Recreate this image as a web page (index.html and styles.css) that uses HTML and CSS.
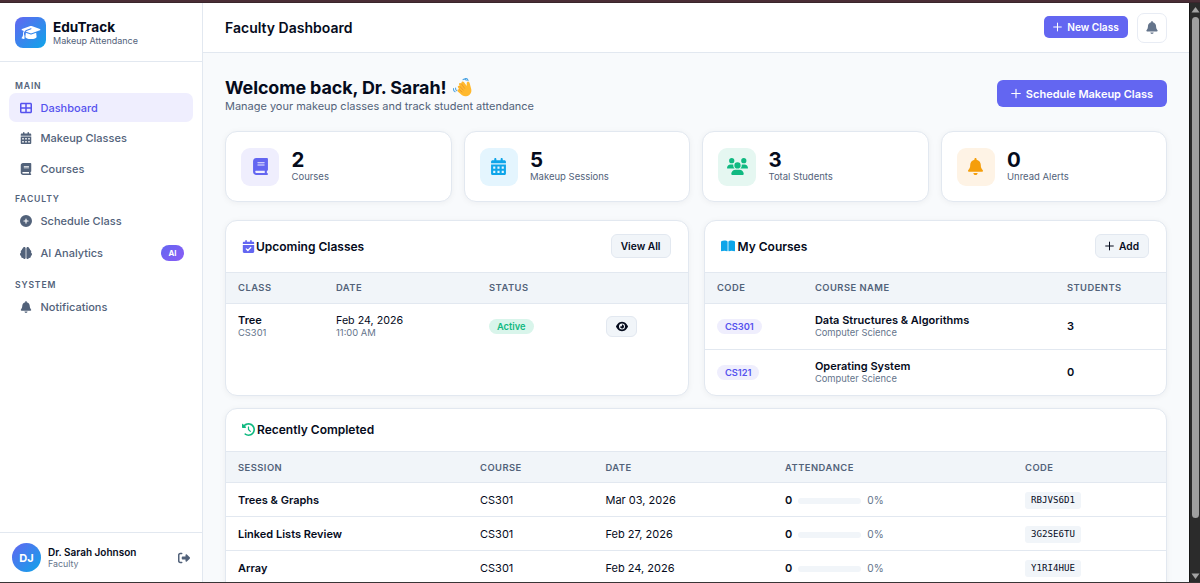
FILE: index.html
```
<!DOCTYPE html>
<html lang="en">
<head>
<meta charset="utf-8">
<title>Faculty Dashboard</title>
<link rel="stylesheet" href="styles.css">
</head>
<body>
<svg class="sprite" aria-hidden="true">
  <symbol id="cap" viewBox="0 0 640 512"><path d="M320 32c-8.1 0-16.1 1.4-23.7 4.1L15.8 137.4C6.3 140.9 0 149.9 0 160s6.3 19.1 15.8 22.6l57.9 20.9C57.3 229.3 48 259.8 48 291.9v28.1c0 28.4-10.8 57.7-22.3 80.8c-6.5 13-13.9 25.8-22.5 37.6C0 442.7-.9 448.3 .9 453.4s6 8.9 11.2 10.2l64 16c4.2 1.1 8.7 .3 12.4-2s6.3-6.1 7.1-10.4c8.6-42.8 4.3-81.2-2.1-108.7C90.3 344.3 86 329.8 80 316.5V291.9c0-30.2 10.2-58.7 27.9-81.5c12.9-15.5 29.6-28 49.2-35.7l157-61.7c8.2-3.2 17.5 .8 20.7 9s-.8 17.5-9 20.7l-157 61.7c-12.4 4.9-23.3 12.4-32.2 21.6l159.6 57.6c7.6 2.7 15.6 4.1 23.7 4.1s16.1-1.4 23.7-4.1L624.2 182.6c9.5-3.4 15.8-12.5 15.8-22.6s-6.3-19.1-15.8-22.6L343.7 36.1C336.1 33.4 328.1 32 320 32zM128 408c0 35.3 86 72 192 72s192-36.7 192-72L496.7 262.6 354.5 314c-11.1 4-22.8 6-34.5 6s-23.5-2-34.5-6L143.3 262.6 128 408z"/></symbol>
  <symbol id="bell" viewBox="0 0 448 512"><path d="M224 0c-17.7 0-32 14.3-32 32V51.2C119 66 64 130.6 64 208v18.8c0 47-17.3 92.4-48.5 127.6l-7.4 8.3c-8.4 9.4-10.4 22.9-5.3 34.4S19.4 416 32 416H416c12.6 0 24-7.4 29.2-18.9s3.1-25-5.3-34.4l-7.4-8.3C401.3 319.2 384 273.9 384 226.8V208c0-77.4-55-142-128-156.8V32c0-17.7-14.3-32-32-32zm45.3 493.3c12-12 18.7-28.3 18.7-45.3H160c0 17 6.7 33.3 18.7 45.3s28.3 18.7 45.3 18.7s33.3-6.7 45.3-18.7z"/></symbol>
  <symbol id="book" viewBox="0 0 448 512"><path fill-rule="evenodd" d="M96 0C43 0 0 43 0 96V416c0 53 43 96 96 96H416c17.7 0 32-14.3 32-32s-14.3-32-32-32V384c17.7 0 32-14.3 32-32V32c0-17.7-14.3-32-32-32H96zm0 384H352v64H96c-17.7 0-32-14.3-32-32s14.3-32 32-32zm32-240c0-8.8 7.2-16 16-16H336c8.8 0 16 7.2 16 16s-7.2 16-16 16H144c-8.8 0-16-7.2-16-16zm16 48H336c8.8 0 16 7.2 16 16s-7.2 16-16 16H144c-8.8 0-16-7.2-16-16s7.2-16 16-16z"/></symbol>
  <symbol id="calendar" viewBox="0 0 448 512"><path fill-rule="evenodd" d="M128 0c17.7 0 32 14.3 32 32V64H288V32c0-17.7 14.3-32 32-32s32 14.3 32 32V64h48c26.5 0 48 21.5 48 48v48H0V112C0 85.5 21.5 64 48 64H96V32c0-17.7 14.3-32 32-32zM0 192H448V464c0 26.5-21.5 48-48 48H48c-26.5 0-48-21.5-48-48V192zM64 256h64v64H64zM192 256h64v64h-64zM320 256h64v64h-64zM64 384h64v64H64zM192 384h64v64h-64zM320 384h64v64h-64z"/></symbol>
  <symbol id="calcheck" viewBox="0 0 448 512"><path d="M128 0c17.7 0 32 14.3 32 32V64H288V32c0-17.7 14.3-32 32-32s32 14.3 32 32V64h48c26.5 0 48 21.5 48 48v48H0V112C0 85.5 21.5 64 48 64H96V32c0-17.7 14.3-32 32-32zM0 192H448V464c0 26.5-21.5 48-48 48H48c-26.5 0-48-21.5-48-48V192z"/><path d="M136 350l62 62 114-116" fill="none" stroke="#fff" stroke-width="50" stroke-linecap="round" stroke-linejoin="round"/></symbol>
  <symbol id="grid" viewBox="0 0 512 512"><path fill-rule="evenodd" d="M64 32H448c35 0 64 29 64 64V416c0 35-29 64-64 64H64c-35 0-64-29-64-64V96C0 61 29 32 64 32zM64 96V224H224V96zM288 96V224H448V96zM64 288V416H224V288zM288 288V416H448V288z"/></symbol>
  <symbol id="circleplus" viewBox="0 0 512 512"><path fill-rule="evenodd" d="M256 512A256 256 0 1 0 256 0a256 256 0 1 0 0 512zM232 344V280H168c-13.3 0-24-10.7-24-24s10.7-24 24-24h64V168c0-13.3 10.7-24 24-24s24 10.7 24 24v64h64c13.3 0 24 10.7 24 24s-10.7 24-24 24H280v64c0 13.3-10.7 24-24 24s-24-10.7-24-24z"/></symbol>
  <symbol id="brain" viewBox="0 0 512 512"><path d="M184 0c30.9 0 56 25.1 56 56V456c0 30.9-25.1 56-56 56c-28.9 0-52.7-21.9-55.7-50.1c-5.2 1.4-10.7 2.1-16.3 2.1c-35.3 0-64-28.7-64-64c0-7.4 1.3-14.6 3.6-21.2C21.4 367.4 0 338.2 0 304c0-31.9 18.7-59.5 45.8-72.3C37.1 220.8 32 207 32 192c0-30.7 21.6-56.3 50.4-62.6C80.8 123.9 80 118 80 112c0-29.9 20.6-55.1 48.3-62.1C131.3 21.9 155.1 0 184 0zM328 0c28.9 0 52.6 21.9 55.7 49.9c27.8 7 48.3 32.1 48.3 62.1c0 6-.8 11.9-2.4 17.4c28.8 6.2 50.4 31.9 50.4 62.6c0 15-5.1 28.8-13.8 39.7C493.3 244.5 512 272.1 512 304c0 34.2-21.4 63.4-51.6 74.8c2.3 6.6 3.6 13.8 3.6 21.2c0 35.3-28.7 64-64 64c-5.6 0-11.1-.7-16.3-2.1c-3 28.2-26.8 50.1-55.7 50.1c-30.9 0-56-25.1-56-56V56c0-30.9 25.1-56 56-56z"/></symbol>
  <symbol id="logout" viewBox="0 0 512 512"><path d="M377.9 105.9L500.7 228.7c7.2 7.2 11.3 17.1 11.3 27.3s-4.1 20.1-11.3 27.3L377.9 406.1c-6.4 6.4-15 9.9-24 9.9c-18.7 0-33.9-15.2-33.9-33.9l0-62.1-128 0c-17.7 0-32-14.3-32-32l0-64c0-17.7 14.3-32 32-32l128 0 0-62.1c0-18.7 15.2-33.9 33.9-33.9c9 0 17.6 3.6 24 9.9zM160 96L96 96c-17.7 0-32 14.3-32 32l0 256c0 17.7 14.3 32 32 32l64 0c17.7 0 32 14.3 32 32s-14.3 32-32 32l-64 0c-53 0-96-43-96-96L0 128C0 75 43 32 96 32l64 0c17.7 0 32 14.3 32 32s-14.3 32-32 32z"/></symbol>
  <symbol id="eye" viewBox="0 0 576 512"><path d="M288 32c-80.8 0-145.5 36.8-192.6 80.6C48.6 156 17.3 208 2.5 243.7c-3.3 7.9-3.3 16.7 0 24.6C17.3 304 48.6 356 95.4 399.4C142.5 443.2 207.2 480 288 480s145.5-36.8 192.6-80.6c46.8-43.5 78.1-95.4 93-131.1c3.3-7.9 3.3-16.7 0-24.6c-14.9-35.7-46.2-87.7-93-131.1C433.5 68.8 368.8 32 288 32zM144 256a144 144 0 1 1 288 0 144 144 0 1 1 -288 0zm144-64c0 35.3-28.7 64-64 64c-7.1 0-13.9-1.2-20.3-3.3c-5.5-1.8-11.9 1.6-11.7 7.4c.3 6.9 1.3 13.8 3.2 20.7c13.7 51.2 66.4 81.6 117.6 67.9s81.6-66.4 67.9-117.6c-11.1-41.5-47.8-69.4-88.6-71.1c-5.8-.2-9.2 6.1-7.4 11.7c2.1 6.4 3.3 13.2 3.3 20.3z" fill-rule="evenodd"/></symbol>
  <symbol id="history" viewBox="0 0 512 512"><path d="M75 75L41 41C25.9 25.9 0 36.6 0 57.9V168c0 13.3 10.7 24 24 24H134.1c21.4 0 32.1-25.9 17-41l-30.8-30.8C155 85.5 203 64 256 64c106 0 192 86 192 192s-86 192-192 192c-40.8 0-78.6-12.7-109.7-34.4c-14.5-10.1-34.4-6.6-44.6 7.9s-6.6 34.4 7.9 44.6C151.2 495 201.7 512 256 512c141.4 0 256-114.6 256-256S397.4 0 256 0C185.3 0 121.3 28.7 75 75zm181 53c-13.3 0-24 10.7-24 24V256c0 6.4 2.5 12.5 7 17l72 72c9.4 9.4 24.6 9.4 33.9 0s9.4-24.6 0-33.9l-65-65V152c0-13.3-10.7-24-24-24z"/></symbol>
  <symbol id="bookopen" viewBox="0 0 576 512"><path d="M249.6 471.5c10.8 3.8 22.4-4.1 22.4-15.5V78.6c0-4.2-1.6-8.4-5-11C247.4 52 202.4 32 144 32C93.5 32 46.3 45.3 18.1 56.1C6.8 60.5 0 71.7 0 83.8V454.1c0 11.9 12.8 20.2 24.1 16.5C55.6 460.1 105.5 448 144 448c33.9 0 79 14 105.6 23.5zm76.8 0C353 462 398.1 448 432 448c38.5 0 88.4 12.1 119.9 22.6c11.3 3.8 24.1-4.6 24.1-16.5V83.8c0-12.1-6.8-23.3-18.1-27.6C529.7 45.3 482.5 32 432 32c-58.4 0-103.4 20-123 35.6c-3.3 2.6-5 6.8-5 11V456c0 11.4 11.7 19.3 22.4 15.5z"/></symbol>
  <symbol id="users" viewBox="0 0 640 512"><path d="M144 0a80 80 0 1 1 0 160A80 80 0 1 1 144 0zM512 0a80 80 0 1 1 0 160A80 80 0 1 1 512 0zM0 298.700C0 239.800 47.800 192 106.700 192h42.700c15.900 0 31 3.500 44.600 9.700c-1.300 7.200-1.900 14.700-1.900 22.300c0 38.200 16.800 72.500 43.300 96H21.300C9.600 320 0 310.400 0 298.700zM405.300 320c26.600-23.500 43.300-57.800 43.300-96c0-7.600-.7-15-1.900-22.300c13.600-6.300 28.700-9.700 44.600-9.700h42.700C592.200 192 640 239.800 640 298.700c0 11.800-9.600 21.300-21.300 21.300H405.300zM224 224a96 96 0 1 1 192 0 96 96 0 1 1 -192 0zM128 485.300C128 411.700 187.700 352 261.300 352H378.700C452.300 352 512 411.700 512 485.300c0 14.700-11.900 26.700-26.700 26.700H154.700c-14.700 0-26.700-11.900-26.700-26.700z"/></symbol>
  <symbol id="plus" viewBox="0 0 448 512"><path d="M250 56c0-15-12-26-26-26s-26 11-26 26V230H24c-15 0-26 12-26 26s11 26 26 26H198V456c0 15 12 26 26 26s26-11 26-26V282H424c15 0 26-12 26-26s-11-26-26-26H250z"/></symbol>
</svg>
<div class="window">
  <div class="edge-top"></div>
  <div class="viewport">
    <aside class="sidebar">
      <div class="brand">
        <div class="logo"><svg class="i-cap"><use href="#cap"/></svg></div>
        <div><div class="brand-name">EduTrack</div><div class="brand-sub">Makeup Attendance</div></div>
      </div>
      <nav class="nav">
        <div class="nav-label">MAIN</div>
        <a class="nav-item active"><svg><use href="#grid"/></svg><span>Dashboard</span></a>
        <a class="nav-item"><svg><use href="#calendar"/></svg><span>Makeup Classes</span></a>
        <a class="nav-item"><svg><use href="#book"/></svg><span>Courses</span></a>
        <div class="nav-label label-faculty">FACULTY</div>
        <a class="nav-item"><svg><use href="#circleplus"/></svg><span>Schedule Class</span></a>
        <a class="nav-item tall"><svg><use href="#brain"/></svg><span>AI Analytics</span><b class="ai">AI</b></a>
        <div class="nav-label label-system">SYSTEM</div>
        <a class="nav-item last"><svg><use href="#bell"/></svg><span>Notifications</span></a>
      </nav>
      <div class="user">
        <div class="avatar">DJ</div>
        <div class="user-text"><div class="user-name">Dr. Sarah Johnson</div><div class="user-role">Faculty</div></div>
        <svg class="i-out"><use href="#logout"/></svg>
      </div>
    </aside>
    <main class="main">
      <header class="topbar">
        <h1>Faculty Dashboard</h1>
        <div class="btn primary new"><svg><use href="#plus"/></svg>New Class</div>
        <div class="bell-btn"><svg><use href="#bell"/></svg></div>
      </header>
      <section class="content">
        <div class="welcome">
          <div>
            <h2>Welcome back, Dr. Sarah!
              <svg class="wave" viewBox="0 0 36 36"><path d="M12 22L9.500 18C8 15.500 11 13.500 12.800 15.500L11.500 12.500C10.500 9.500 14 8 15.800 10.500L16 9C16 6 19.500 5.500 21 8L26 15V10C26 6.500 30.500 6 31.500 9.500L34.500 21C36 28 32 34 25 34.500C20 35 17 33 14 30L9 25.500C7 23 9.500 20.500 12 22z" fill="#ffb92e"/><path d="M16 11l6 8.500M13 16l6.500 7M12 22l5 4.500" fill="none" stroke="#e58a2b" stroke-width="1.300" stroke-linecap="round"/><path d="M19 3c2-1.500 5-1 6 1.500M23 1c3-.5 5 1 5.500 4M1 20c-.5 3 .5 5 3 6M5 19c-.5 2 .5 4 2 5" fill="none" stroke="#4ba3e3" stroke-width="2" stroke-linecap="round"/></svg>
            </h2>
            <p>Manage your makeup classes and track student attendance</p>
          </div>
          <div class="btn primary sched"><svg><use href="#plus"/></svg>Schedule Makeup Class</div>
        </div>
        <div class="stats">
          <div class="card stat"><div class="tile violet"><svg><use href="#book"/></svg></div><div><div class="num">2</div><div class="lbl">Courses</div></div></div>
          <div class="card stat"><div class="tile sky"><svg><use href="#calendar"/></svg></div><div><div class="num">5</div><div class="lbl">Makeup Sessions</div></div></div>
          <div class="card stat"><div class="tile green"><svg class="wide"><use href="#users"/></svg></div><div><div class="num">3</div><div class="lbl">Total Students</div></div></div>
          <div class="card stat"><div class="tile amber"><svg><use href="#bell"/></svg></div><div><div class="num">0</div><div class="lbl">Unread Alerts</div></div></div>
        </div>
        <div class="panels">
          <div class="card panel">
            <div class="panel-head"><svg class="h-cal"><use href="#calcheck"/></svg><h3>Upcoming Classes</h3><div class="btn soft">View All</div></div>
            <table class="t-up">
              <colgroup><col class="w98"><col class="w153"><col class="w117"><col></colgroup>
              <tr><th>CLASS</th><th>DATE</th><th>STATUS</th><th></th></tr>
              <tr><td><b>Tree</b><small>CS301</small></td><td class="when">Feb 24, 2026<small>11:00 AM</small></td><td><span class="pill ok">Active</span></td><td><span class="eye-btn"><svg><use href="#eye"/></svg></span></td></tr>
            </table>
          </div>
          <div class="card panel">
            <div class="panel-head"><svg class="h-book"><use href="#bookopen"/></svg><h3>My Courses</h3><div class="btn soft"><svg><use href="#plus"/></svg>Add</div></div>
            <table class="t-courses">
              <colgroup><col class="w98"><col class="w252"><col></colgroup>
              <tr><th>CODE</th><th>COURSE NAME</th><th>STUDENTS</th></tr>
              <tr><td><span class="pill code">CS301</span></td><td><b>Data Structures &amp; Algorithms</b><small>Computer Science</small></td><td><b>3</b></td></tr>
              <tr><td><span class="pill code">CS121</span></td><td><b>Operating System</b><small>Computer Science</small></td><td><b>0</b></td></tr>
            </table>
          </div>
        </div>
        <div class="card recent">
          <div class="panel-head"><svg class="h-hist"><use href="#history"/></svg><h3>Recently Completed</h3></div>
          <table class="t-recent">
            <colgroup><col class="w242"><col class="w125"><col class="w180"><col class="w240"><col></colgroup>
            <tr><th>SESSION</th><th>COURSE</th><th>DATE</th><th>ATTENDANCE</th><th>CODE</th></tr>
            <tr><td><b>Trees &amp; Graphs</b></td><td>CS301</td><td>Mar 03, 2026</td><td><div class="att"><b>0</b><i></i><em>0%</em></div></td><td><code>RBJVS6D1</code></td></tr>
            <tr><td><b>Linked Lists Review</b></td><td>CS301</td><td>Feb 27, 2026</td><td><div class="att"><b>0</b><i></i><em>0%</em></div></td><td><code>3G2SE6TU</code></td></tr>
            <tr><td><b>Array</b></td><td>CS301</td><td>Feb 24, 2026</td><td><div class="att"><b>0</b><i></i><em>0%</em></div></td><td><code>Y1RI4HUE</code></td></tr>
          </table>
        </div>
      </section>
    </main>
    <div class="scrollbar"><svg viewBox="0 0 9 7"><path d="M4.500 1L8.500 6.500H.5z"/></svg><div class="thumb"></div><svg viewBox="0 0 9 7"><path d="M4.500 6L.5.500h8z"/></svg></div>
  </div>
  <div class="edge-bottom"></div>
</div>
</body>
</html>
```
FILE: styles.css
```
* { box-sizing: border-box; }
body { margin: 0; font-family: Inter, "Liberation Sans", sans-serif; color: #050b1c; }
svg { fill: currentColor; display: block; flex: none; }
h1, h2, h3, p { margin: 0; }
b { font-weight: 600; }
.sprite { display: none; }
.window { width: 1200px; height: 583px; overflow: hidden; display: flex; flex-direction: column; }
.edge-top { height: 3px; flex: none; background: #4a2d36; border-bottom: 1px solid #3a252c; }
.edge-bottom { height: 1px; flex: none; background: #393536; }
.viewport { flex: 1; min-height: 0; display: flex; background: #f8fafc; }

.sidebar { width: 203px; flex: none; background: #fff; border-right: 1px solid #e2e8f0; display: flex; flex-direction: column; }
.brand { height: 59px; flex: none; border-bottom: 1px solid #e2e8f0; display: flex; align-items: center; gap: 7px; padding: 1px 0 0 15px; }
.logo { width: 31px; height: 31px; border-radius: 8px; background: linear-gradient(135deg, #6366f1, #0ea5e9); color: #fff; display: grid; place-items: center; }
.i-cap { width: 20px; height: 15px; }
.brand-name { font-size: 13.6px; font-weight: 700; line-height: 16px; padding-top: 1px; }
.brand-sub { font-size: 9px; line-height: 12px; color: #52627a; }
.nav { flex: 1; padding: 17px 9px 0; }
.nav-label { font-size: 8.6px; font-weight: 600; letter-spacing: .85px; line-height: 14px; color: #52627a; padding-left: 6px; }
.label-faculty { margin-top: 9px; }
.label-system { margin-top: 9px; }
.nav-item { display: flex; align-items: center; height: 29px; margin-bottom: 1.500px; padding: 0 9px 0 11px; border-radius: 7px; gap: 8.500px; font-size: 11px; font-weight: 500; color: #52627a; }
.nav-item svg { width: 12px; height: 12px; }
.nav-item.active { background: #efeefe; color: #5552ee; }
.nav-item.tall { height: 32px; }
.nav-item.last { margin-top: 1px; }
.ai { margin-left: auto; width: 23px; height: 16px; border-radius: 8px; background: linear-gradient(135deg, #6366f1, #8b5cf6); color: #fff; font-size: 7.8px; font-weight: 700; display: grid; place-items: center; }
.user { height: 50px; flex: none; border-top: 1px solid #e2e8f0; display: flex; align-items: center; padding: 0 12px 0 12px; gap: 7px; }
.avatar { width: 29px; height: 29px; border-radius: 50%; background: linear-gradient(135deg, #6366f1, #0ea5e9); color: #fff; font-size: 11px; font-weight: 700; display: grid; place-items: center; }
.user-text { flex: 1; }
.user-name { font-size: 10px; font-weight: 600; line-height: 12px; white-space: nowrap; }
.user-role { font-size: 8.8px; line-height: 12px; color: #64748b; }
.i-out { width: 12px; height: 12px; color: #52627a; }

.main { flex: 1; min-width: 0; display: flex; flex-direction: column; }
.topbar { height: 50px; flex: none; background: #fff; border-bottom: 1px solid #e2e8f0; display: flex; align-items: center; padding: 0 22px 0 22px; }
.topbar h1 { flex: 1; font-size: 14px; font-weight: 600; }
.btn { display: flex; align-items: center; justify-content: center; font-weight: 600; white-space: nowrap; }
.primary { background: #6366f1; color: #fff; border-radius: 6px; }
.new { width: 84px; height: 22px; margin-bottom: 1px; font-size: 10.1px; gap: 5px; border-radius: 5px; }
.new svg { width: 9px; height: 10px; }
.bell-btn { width: 30px; height: 30px; margin-left: 9px; border: 1px solid #e8ecf4; border-radius: 7px; display: grid; place-items: center; color: #64748b; }
.bell-btn svg { width: 12px; height: 13px; }
.content { padding: 24px 22px 0 22px; }
.welcome { display: flex; justify-content: space-between; align-items: flex-start; height: 54px; }
.welcome h2 { font-size: 17.900px; font-weight: 700; line-height: 21px; display: flex; align-items: center; gap: 7px; letter-spacing: -.1px; }
.wave { width: 19px; height: 19px; }
.welcome p { font-size: 10.970px; line-height: 16px; color: #52627a; }
.sched { width: 170px; height: 27px; margin-top: 3px; font-size: 11px; gap: 5px; }
.sched svg { width: 10px; height: 11px; }

.card { background: #fff; border: 1px solid #e2e8f0; border-radius: 12px; box-shadow: 0 1px 6px rgba(15, 23, 42, .05); overflow: hidden; }
.stats { display: grid; grid-template-columns: repeat(4, 1fr); gap: 12px; }
.stat { height: 71px; display: flex; align-items: center; padding-left: 15px; gap: 12.500px; }
.tile { width: 38px; height: 38px; border-radius: 9px; display: grid; place-items: center; }
.tile svg { width: 15px; height: 17px; }
.tile svg.wide { width: 21px; height: 17px; }
.violet { background: #efeefd; color: #6366f1; }
.sky { background: #e4f5fe; color: #0ea5e9; }
.green { background: #e5f7f1; color: #10b981; }
.amber { background: #fef3e5; color: #f59e0b; }
.num { font-size: 20.400px; font-weight: 700; line-height: 22px; }
.lbl { font-size: 9.500px; line-height: 12px; padding-bottom: 1px; color: #52627a; }

.panels { display: grid; grid-template-columns: 1fr 1fr; gap: 15px; margin-top: 18px; }
.panel { height: 176px; }
.panel-head { height: 51px; display: flex; align-items: center; padding: 0 17px 1px 16px; }
.panel-head h3 { flex: 1; font-size: 12px; font-weight: 600; }
.h-cal { width: 13px; height: 13px; color: #6366f1; margin-right: 1px; }
.h-book { width: 14px; height: 14px; color: #0ea5e9; margin-right: 3px; }
.h-hist { width: 13px; height: 13px; color: #10b981; margin-right: 2px; }
.soft { height: 24px; padding: 0 9px; background: #f1f5f9; border: 1px solid #e2e8f0; border-radius: 6px; font-size: 10.200px; gap: 5px; }
.soft svg { width: 9px; height: 10px; }
table { width: 100%; table-layout: fixed; border-collapse: separate; border-spacing: 0; }
.w98 { width: 98px; } .w153 { width: 153px; } .w117 { width: 117px; } .w252 { width: 252px; }
.w242 { width: 242px; } .w125 { width: 125.500px; } .w180 { width: 179.500px; } .w240 { width: 240px; }
th { height: 32px; padding: 0 0 1px 12px; text-align: left; font-size: 9.400px; font-weight: 600; letter-spacing: .47px; color: #52627a; background: #f1f5f9; border-top: 1px solid #e2e8f0; border-bottom: 1px solid #e2e8f0; }
td { height: 46px; padding: 0 0 0 12px; font-size: 11px; line-height: 13px; border-bottom: 1px solid #e2e8f0; }
tr:last-child td { border-bottom: 0; padding-bottom: 1px; }
.t-courses th, .t-courses td { padding-left: 12.400px; }
td.when { font-size: 10.700px; }
td b { white-space: nowrap; }
td small { display: block; font-size: 9.400px; line-height: 12px; color: #64748b; }
.pill { display: inline-block; height: 15px; padding: 0 8px; border-radius: 8px; font-size: 9.300px; font-weight: 600; line-height: 15px; vertical-align: middle; }
.ok { background: #d9f5eb; color: #10b981; }
.code { background: #efeefd; color: #5552ee; }
.eye-btn { display: grid; place-items: center; width: 31px; height: 21px; border: 1px solid #e2e8f0; border-radius: 6px; background: #f1f5f9; }
.eye-btn svg { width: 12px; height: 11px; }

.recent { margin-top: 12px; height: 220px; }
.recent .panel-head { height: 42px; }
.recent th { padding-bottom: 0; }
.t-recent td, .t-recent tr:last-child td { height: 34px; padding-top: 2px; padding-bottom: 0; border-bottom: 1px solid #e2e8f0; }
.att { display: flex; align-items: center; }
.att i { width: 63px; height: 6px; border-radius: 3px; background: #f1f5f9; margin: 0 6px; }
.att em { font-style: normal; font-size: 10.200px; color: #64748b; }
code { display: inline-block; width: 56px; height: 17px; border-radius: 3px; background: #f1f5f9; font: 9.100px/17px "DejaVu Sans Mono", monospace; text-align: center; vertical-align: middle; }

.scrollbar { width: 11px; flex: none; background: #2b2b2b; border-left: 1px solid #161616; display: flex; flex-direction: column; align-items: center; padding: 3px 0 2px; color: #a3a3a3; }
.scrollbar svg { width: 9px; height: 7px; }
.thumb { width: 7px; height: 501px; margin: 4px 0 auto; border-radius: 4px; background: #9f9f9f; }
```
